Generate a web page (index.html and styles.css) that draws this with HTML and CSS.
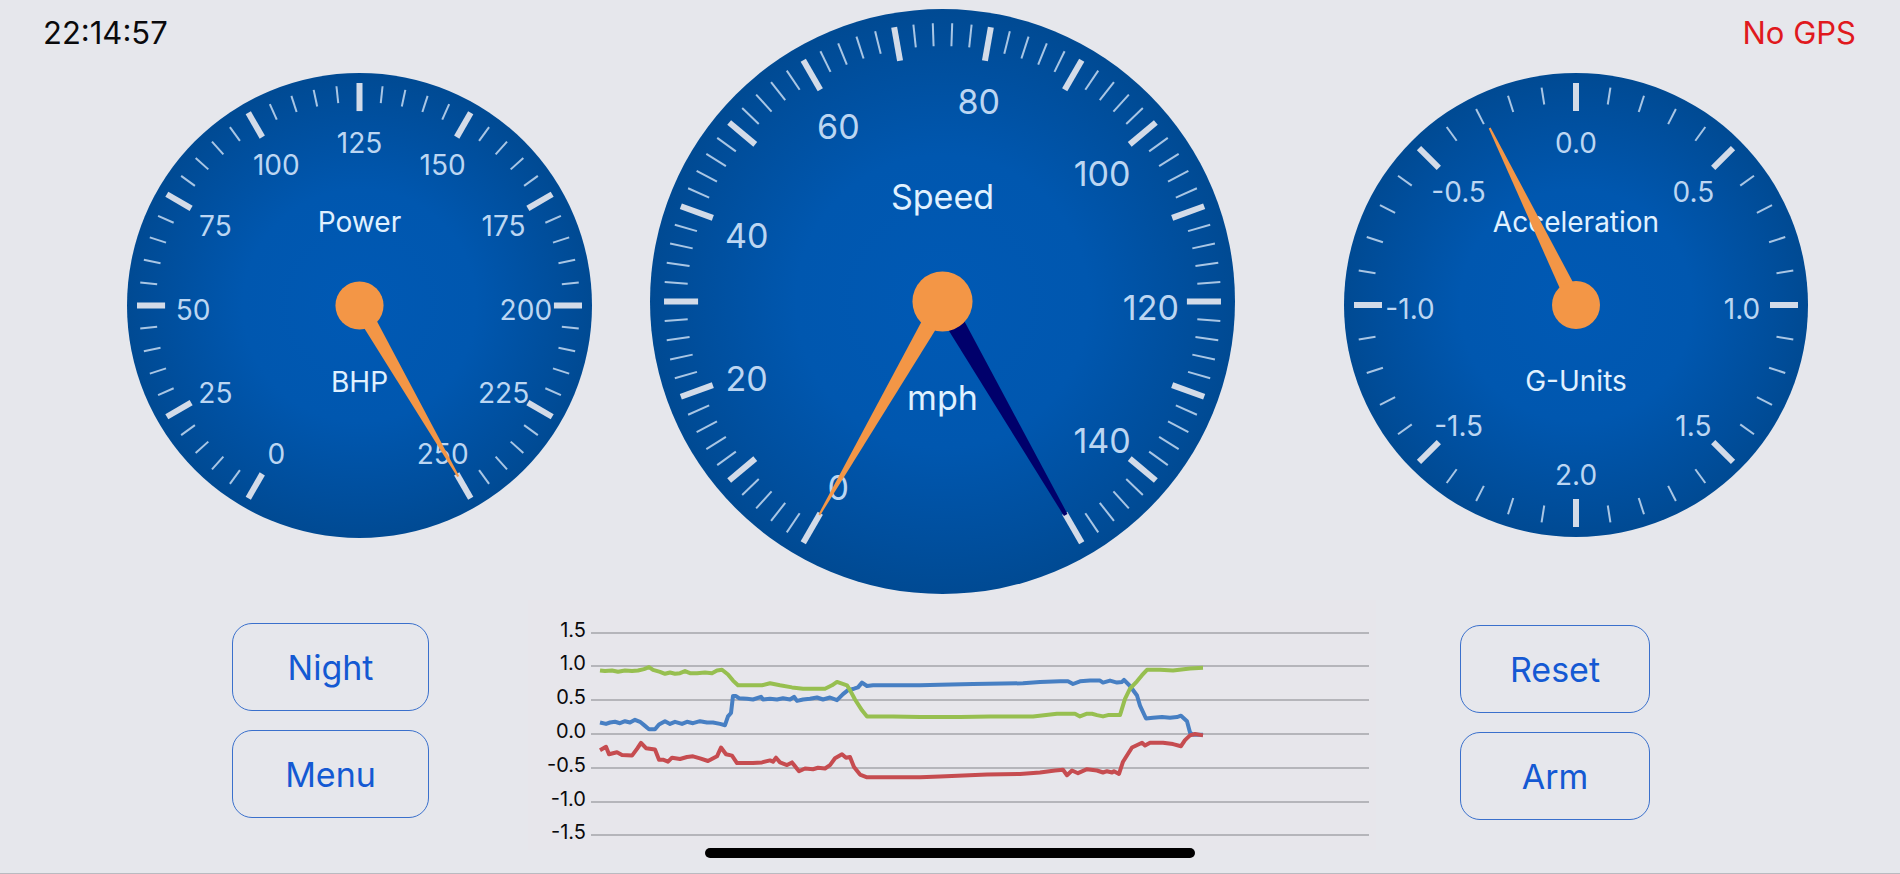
FILE: index.html
```html
<!DOCTYPE html>
<html lang="en">
<head>
    <meta charset="UTF-8">
    <meta name="viewport" content="width=device-width, initial-scale=1.0">
    <title>Dashboard</title>
    <link rel="stylesheet" href="styles.css">
</head>
<body>
    <main class="gauges">
        <section class="panel left">
            <div class="status" id="clock">22:14:57</div>
            <svg class="gauge" id="power" viewBox="-232 -232 464 464"></svg>
        </section>
        <section class="panel middle">
            <svg class="gauge big" id="speed" viewBox="-292 -292 584 584"></svg>
        </section>
        <section class="panel right">
            <div class="status warning">No GPS</div>
            <svg class="gauge" id="accel" viewBox="-232 -232 464 464"></svg>
        </section>
    </main>
    <div class="controls">
        <div class="buttons left-buttons">
            <button type="button">Night</button>
            <button type="button">Menu</button>
        </div>
        <svg class="chart" id="chart" viewBox="0 0 848 250"></svg>
        <div class="buttons right-buttons">
            <button type="button">Reset</button>
            <button type="button">Arm</button>
        </div>
    </div>
    <div class="home-bar"></div>
    <script src="script.js"></script>
</body>
</html>
```
FILE: styles.css
```css
* {
    box-sizing: border-box;
}
body {
    margin: 0;
    min-height: 100vh;
    display: flex;
    flex-direction: column;
    background-color: #e6e7ec;
    color: #0a0a0c;
    font-family: Inter, "Liberation Sans", sans-serif;
    border-bottom: 1px solid #b9bac0;
}
svg {
    display: block;
    width: 100%;
    height: auto;
}
.gauges {
    display: grid;
    grid-template-columns: minmax(0, 621fr) minmax(0, 643fr) minmax(0, 636fr);
}
.left {
    padding: 0 29px 0 127px;
}
.middle {
    padding: 9px 29px 0;
}
.right {
    padding: 0 92px 0 80px;
}
.status {
    height: 73px;
    padding-top: 13px;
    font-size: 31px;
    line-height: 40px;
    white-space: nowrap;
}
.left .status {
    margin-left: -84px;
}
.right .status {
    margin-right: -48px;
    text-align: right;
}
.warning {
    color: #e0191e;
}

/* gauges */
.gauge text {
    font-size: 28px;
    text-anchor: middle;
    fill: #bcd6f2;
}
.gauge.big text {
    font-size: 34px;
}
.gauge .caption {
    fill: #e0f1ff;
}
.major {
    stroke: #d3dbe8;
    stroke-width: 6;
}
.minor {
    stroke: #a9c6e4;
    stroke-width: 2;
}
.needle {
    fill: #f39646;
}
.peak {
    fill: #00006b;
}

/* bottom row */
.controls {
    display: grid;
    grid-template-columns: minmax(0, 528fr) minmax(0, 848fr) minmax(0, 524fr);
    margin-top: 6px;
}
.buttons {
    display: flex;
    flex-direction: column;
    gap: 19px;
}
.left-buttons {
    padding: 23px 99px 0 232px;
}
.right-buttons {
    padding: 25px 250px 0 84px;
}
button {
    height: 88px;
    padding: 0;
    border: 1px solid #3a70cc;
    border-radius: 20px;
    background: none;
    color: #1459d3;
    font-family: inherit;
    font-size: 34px;
    cursor: pointer;
}
button:hover {
    background-color: #dbe2f0;
}
.chart {
    background-color: #e7e6eb;
}
.chart text {
    font-size: 20px;
    text-anchor: end;
    fill: #0a0a0c;
}
.grid-line {
    stroke: #b5b5ba;
    stroke-width: 2;
}
.series {
    fill: none;
    stroke-width: 4;
    stroke-linejoin: round;
}
.blue {
    stroke: #477fc3;
}
.green {
    stroke: #97bf50;
}
.red {
    stroke: #c64c50;
}
.home-bar {
    width: 490px;
    max-width: 80%;
    height: 10px;
    margin: -2px auto 14px;
    border-radius: 5px;
    background-color: #000;
    position: relative;
}
```
FILE: script.js
```js
// point on a dial, angle in degrees clockwise from the top
function polar(angle, r) {
    const a = angle * Math.PI / 180;
    return [(Math.sin(a) * r).toFixed(2), (-Math.cos(a) * r).toFixed(2)];
}

function tick(angle, inner, outer, cls) {
    const [x1, y1] = polar(angle, inner);
    const [x2, y2] = polar(angle, outer);
    return `<line class="${cls}" x1="${x1}" y1="${y1}" x2="${x2}" y2="${y2}"/>`;
}

function needle(angle, length, base, tip, cls) {
    return `<polygon class="${cls}" transform="rotate(${angle})" points="${-base},0 ${-tip},${-length} ${tip},${-length} ${base},0"/>`;
}

function drawGauge(id, g) {
    let out = `<defs><radialGradient id="${id}-face">
        <stop offset="0" stop-color="#0059b4"/>
        <stop offset="0.5" stop-color="#0057af"/>
        <stop offset="0.85" stop-color="#004e9c"/>
        <stop offset="1" stop-color="#004a93"/>
    </radialGradient></defs>
    <circle r="${g.radius}" fill="url(#${id}-face)"/>`;

    for (let i = 0; i <= g.ticks; i++) {
        const angle = g.start + i * g.step;
        if (i % 5 === 0) {
            out += tick(angle, g.majorInner, g.outer, 'major');
        } else {
            out += tick(angle, g.minorInner, g.minorOuter, 'minor');
        }
    }
    g.labels.forEach((label, i) => {
        const [x, y] = polar(g.start + i * g.labelStep, g.labelRadius);
        out += `<text x="${x}" y="${Number(y) + g.baseline}">${label}</text>`;
    });
    out += `<text class="caption" y="${g.titleY}">${g.title}</text>`;
    out += `<text class="caption" y="${g.unitY}">${g.unit}</text>`;
    if (g.peak) {
        out += needle(g.peak, g.needleLength, 10, 2, 'peak');
    }
    out += needle(g.angle, g.needleLength, g.needleBase, 1, 'needle');
    out += `<circle class="needle" r="${g.hub}"/>`;
    document.getElementById(id).innerHTML = out;
}

const small = {
    radius: 232, outer: 222, majorInner: 194, minorOuter: 220, minorInner: 203,
    labelRadius: 166, baseline: 14, titleY: -73, unitY: 86,
    needleLength: 197, needleBase: 8, hub: 24
};

drawGauge('power', {
    ...small, title: 'Power', unit: 'BHP',
    start: -150, step: 6, ticks: 50, labelStep: 30,
    labels: [0, 25, 50, 75, 100, 125, 150, 175, 200, 225, 250],
    angle: 150
});

drawGauge('accel', {
    ...small, title: 'Acceleration', unit: 'G-Units',
    start: -135, step: 9, ticks: 39, labelStep: 45,
    labels: ['-1.5', '-1.0', '-0.5', '0.0', '0.5', '1.0', '1.5', '2.0'],
    angle: -26
});

drawGauge('speed', {
    radius: 292, outer: 278, majorInner: 244, minorOuter: 278, minorInner: 255,
    labelRadius: 208, baseline: 18, titleY: -92, unitY: 108,
    needleLength: 246, needleBase: 9, hub: 30,
    title: 'Speed', unit: 'mph',
    start: -150, step: 4, ticks: 75, labelStep: 40,
    labels: [0, 20, 40, 60, 80, 100, 120, 140],
    angle: -150, peak: 150
});

// samples as x:value, value in hundredths of a g
const series = {
    blue: '72:17 78:15 82:17 87:18 92:16 97:19 102:17 107:21 112:18 117:12 121:7 127:7 131:14 137:19 142:15 147:18 154:15 159:18 165:16 172:19 179:17 185:17 192:15 197:13 200:26 203:31 205:56 208:56 211:53 219:52 225:51 233:55 235:51 242:52 249:51 255:53 262:51 266:55 269:49 275:51 282:52 289:54 295:51 302:54 309:50 315:59 320:65 326:67 330:69 334:76 339:71 345:72 392:72 412:73 445:74 495:75 512:77 532:78 540:78 545:74 552:78 562:79 572:79 575:76 582:79 589:76 594:77 596:80 602:71 609:57 612:42 618:23 625:24 634:25 642:24 649:25 653:27 659:19 662:2 665:-1 675:-1',
    green: '72:94 77:93 84:94 90:92 97:94 104:93 110:94 116:96 121:99 125:95 132:92 137:89 142:91 147:89 152:90 157:93 162:90 169:90 177:91 184:90 189:94 194:95 200:88 205:79 210:72 225:72 234:72 242:75 252:72 264:69 275:67 297:67 304:72 309:77 319:72 322:65 327:51 334:35 339:26 365:26 392:25 432:25 462:26 505:26 529:30 547:30 552:26 559:30 564:30 569:28 575:26 580:28 592:28 597:52 602:67 609:78 614:87 619:95 632:95 645:94 662:97 675:98',
    red: '72:-24 78:-19 81:-30 89:-27 94:-31 104:-32 109:-22 113:-13 118:-21 127:-23 131:-38 135:-38 140:-41 144:-35 152:-37 159:-34 165:-33 172:-36 180:-40 189:-33 193:-20 198:-30 204:-32 209:-43 225:-43 234:-42 242:-39 245:-41 248:-35 252:-42 259:-46 264:-42 271:-55 277:-51 285:-52 290:-50 297:-51 302:-46 307:-36 314:-30 318:-35 322:-34 326:-49 332:-60 339:-64 392:-64 412:-63 459:-60 492:-59 512:-57 527:-54 535:-53 539:-61 544:-54 550:-58 559:-52 569:-54 575:-57 579:-55 584:-57 586:-55 591:-59 595:-41 604:-20 614:-13 617:-17 622:-13 635:-13 645:-15 653:-18 657:-9 662:-2 667:0 675:-2'
};

function drawChart() {
    const toY = v => 134 - v * 0.676;
    let out = '';
    for (let v = 150; v >= -150; v -= 50) {
        const y = Math.round(toY(v));
        out += `<text x="58" y="${y + 4}">${(v / 100).toFixed(1)}</text>`;
        out += `<line class="grid-line" x1="63" x2="841" y1="${y}" y2="${y}"/>`;
    }
    for (const name in series) {
        const points = series[name].split(' ').map(p => {
            const [x, v] = p.split(':');
            return x + ',' + toY(v).toFixed(1);
        });
        out += `<polyline class="series ${name}" points="${points.join(' ')}"/>`;
    }
    document.getElementById('chart').innerHTML = out;
}
drawChart();
```
